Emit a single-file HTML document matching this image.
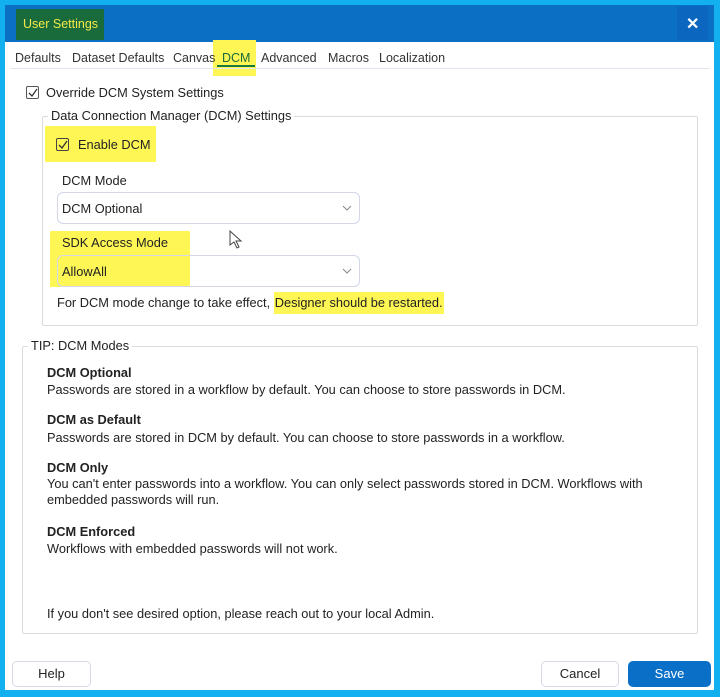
<!DOCTYPE html>
<html><head><style>
*{margin:0;padding:0;box-sizing:border-box}
body{width:720px;height:697px;background:#12b0ee;position:relative;overflow:hidden;font-family:"Liberation Sans",sans-serif;font-size:12.8px;color:#222}
.a{position:absolute;white-space:nowrap}
.dlg{position:absolute;left:5px;top:5px;width:709px;height:685px;background:#fff}
.cb{position:absolute;width:13px;height:13px;border:1px solid #555;border-radius:2px;background:#fff}
.cb svg{position:absolute;left:1px;top:1px}
.hl{position:absolute;background:#fdf654}
.grp{position:absolute;border:1px solid #dcdcdc;border-radius:2px}
.lg{position:absolute;background:#fff;padding:0 3px;line-height:14px}
.dd{position:absolute;border:1px solid #d3d7e8;border-radius:6px}
.dd span{position:absolute;left:4px;top:8px}
.dd svg{position:absolute;right:7px;top:12px}
.btn{position:absolute;border:1px solid #d6dae8;border-radius:5px;background:#fff;text-align:center;line-height:24px;font-size:13px}
b{font-weight:bold}
</style></head><body>
<div class="dlg"></div>
<div class="a" style="left:5px;top:5px;width:709px;height:37px;background:#0b6fc4"></div>
<div class="a" style="left:677px;top:6px;width:31px;height:34px;background:#0a66be"></div>
<div class="a" style="left:16px;top:9px;width:88px;height:31px;background:#1a6b3b;color:#f2e94a;font-size:12.5px;line-height:31px;padding-left:7px">User Settings</div>
<div class="a" style="left:686px;top:14px;color:#fff;font-size:16px;font-weight:bold">✕</div>
<div class="hl" style="left:213px;top:40px;width:43px;height:36px"></div>
<div class="a" style="left:10px;top:68px;width:700px;height:1px;background:#e2e6ee"></div>
<div class="a" style="left:217px;top:65px;width:38px;height:2px;background:#1a7a3c"></div>
<div class="a" style="left:15px;top:51px;color:#333;font-size:12.5px">Defaults</div>
<div class="a" style="left:72px;top:51px;color:#333;font-size:12.5px">Dataset Defaults</div>
<div class="a" style="left:173px;top:51px;color:#333;font-size:12.5px">Canvas</div>
<div class="a" style="left:222px;top:51px;color:#1a6a3a;font-size:12.5px">DCM</div>
<div class="a" style="left:261px;top:51px;color:#333;font-size:12.5px">Advanced</div>
<div class="a" style="left:328px;top:51px;color:#333;font-size:12.5px">Macros</div>
<div class="a" style="left:379px;top:51px;color:#333;font-size:12.5px">Localization</div>
<div class="cb" style="left:26px;top:86px"><svg width="10" height="10"><path d="M1 5l3 3 5-7" stroke="#333" stroke-width="1.3" fill="none"/></svg></div>
<div class="a" style="left:46px;top:85px">Override DCM System Settings</div>
<div class="grp" style="left:42px;top:116px;width:656px;height:210px"></div>
<div class="lg" style="left:48px;top:109px">Data Connection Manager (DCM) Settings</div>
<div class="hl" style="left:45px;top:126px;width:111px;height:36px"></div>
<div class="cb" style="left:56px;top:138px;border-color:#444;background:transparent"><svg width="10" height="10"><path d="M1 5l3 3 5-7" stroke="#333" stroke-width="1.3" fill="none"/></svg></div>
<div class="a" style="left:78px;top:137px">Enable DCM</div>
<div class="a" style="left:62px;top:173px">DCM Mode</div>
<div class="dd" style="left:57px;top:192px;width:303px;height:32px"><span>DCM Optional</span><svg width="10" height="6"><path d="M1 1l4 4 4-4" stroke="#888" fill="none"/></svg></div>
<div class="hl" style="left:50px;top:231px;width:140px;height:56px"></div>
<div class="a" style="left:62px;top:235px">SDK Access Mode</div>
<div class="dd" style="left:57px;top:255px;width:303px;height:32px"><span>AllowAll</span><svg width="10" height="6"><path d="M1 1l4 4 4-4" stroke="#888" fill="none"/></svg></div>
<svg class="a" style="left:229px;top:230px" width="14" height="20"><path d="M1 1v14l4-3 3 6 2-1-3-6h5z" fill="#fff" stroke="#444"/></svg>
<div class="a" style="left:57px;top:295px">For DCM mode change to take effect, <span style="background:#fdf654;padding:3px 1px 4px">Designer should be restarted.</span></div>
<div class="grp" style="left:22px;top:346px;width:676px;height:288px"></div>
<div class="lg" style="left:28px;top:339px">TIP: DCM Modes</div>
<div class="a" style="left:47px;top:365px"><b>DCM Optional</b></div>
<div class="a" style="left:47px;top:382px">Passwords are stored in a workflow by default. You can choose to store passwords in DCM.</div>
<div class="a" style="left:47px;top:412px"><b>DCM as Default</b></div>
<div class="a" style="left:47px;top:430px">Passwords are stored in DCM by default. You can choose to store passwords in a workflow.</div>
<div class="a" style="left:47px;top:460px"><b>DCM Only</b></div>
<div class="a" style="left:47px;top:476px">You can't enter passwords into a workflow. You can only select passwords stored in DCM. Workflows with</div>
<div class="a" style="left:47px;top:492px">embedded passwords will run.</div>
<div class="a" style="left:47px;top:524px"><b>DCM Enforced</b></div>
<div class="a" style="left:47px;top:541px">Workflows with embedded passwords will not work.</div>
<div class="a" style="left:47px;top:606px">If you don't see desired option, please reach out to your local Admin.</div>
<div class="btn" style="left:12px;top:661px;width:79px;height:26px">Help</div>
<div class="btn" style="left:541px;top:661px;width:78px;height:26px">Cancel</div>
<div class="btn" style="left:628px;top:661px;width:83px;height:26px;background:#0a6fc7;border-color:#0a6fc7;color:#fff">Save</div>
</body></html>
